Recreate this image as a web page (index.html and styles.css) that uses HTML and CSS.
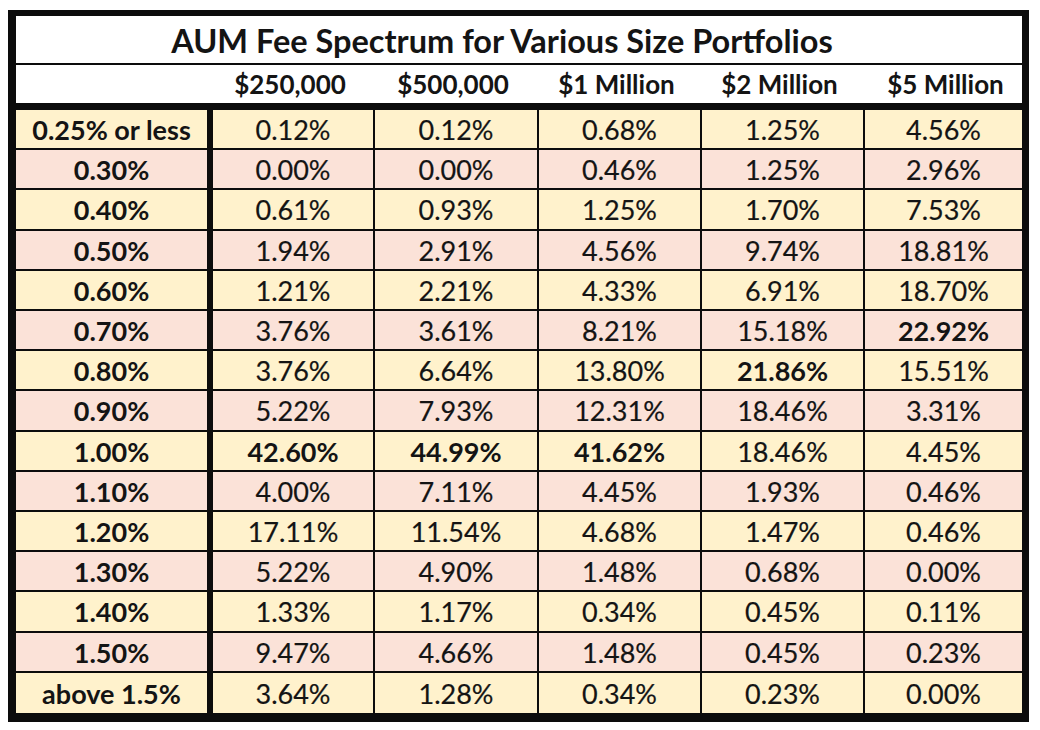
FILE: index.html
```html
<!DOCTYPE html>
<html lang="en">
<head>
<meta charset="utf-8">
<title>AUM Fee Spectrum</title>
<link rel="stylesheet" href="styles.css">
</head>
<body>
<div class="frame">
  <div class="grid">
    <div class="title">AUM Fee Spectrum for Various Size Portfolios</div>
    <div class="hd first"></div>
    <div class="hd">$250,000</div>
    <div class="hd">$500,000</div>
    <div class="hd">$1 Million</div>
    <div class="hd">$2 Million</div>
    <div class="hd last">$5 Million</div>

    <div class="c y lbl">0.25% or less</div><div class="c y">0.12%</div><div class="c y">0.12%</div><div class="c y">0.68%</div><div class="c y">1.25%</div><div class="c y last">4.56%</div>
    <div class="c p lbl">0.30%</div><div class="c p">0.00%</div><div class="c p">0.00%</div><div class="c p">0.46%</div><div class="c p">1.25%</div><div class="c p last">2.96%</div>
    <div class="c y lbl">0.40%</div><div class="c y">0.61%</div><div class="c y">0.93%</div><div class="c y">1.25%</div><div class="c y">1.70%</div><div class="c y last">7.53%</div>
    <div class="c p lbl">0.50%</div><div class="c p">1.94%</div><div class="c p">2.91%</div><div class="c p">4.56%</div><div class="c p">9.74%</div><div class="c p last">18.81%</div>
    <div class="c y lbl">0.60%</div><div class="c y">1.21%</div><div class="c y">2.21%</div><div class="c y">4.33%</div><div class="c y">6.91%</div><div class="c y last">18.70%</div>
    <div class="c p lbl">0.70%</div><div class="c p">3.76%</div><div class="c p">3.61%</div><div class="c p">8.21%</div><div class="c p">15.18%</div><div class="c p last b">22.92%</div>
    <div class="c y lbl">0.80%</div><div class="c y">3.76%</div><div class="c y">6.64%</div><div class="c y">13.80%</div><div class="c y b">21.86%</div><div class="c y last">15.51%</div>
    <div class="c p lbl">0.90%</div><div class="c p">5.22%</div><div class="c p">7.93%</div><div class="c p">12.31%</div><div class="c p">18.46%</div><div class="c p last">3.31%</div>
    <div class="c y lbl">1.00%</div><div class="c y b">42.60%</div><div class="c y b">44.99%</div><div class="c y b">41.62%</div><div class="c y">18.46%</div><div class="c y last">4.45%</div>
    <div class="c p lbl">1.10%</div><div class="c p">4.00%</div><div class="c p">7.11%</div><div class="c p">4.45%</div><div class="c p">1.93%</div><div class="c p last">0.46%</div>
    <div class="c y lbl">1.20%</div><div class="c y">17.11%</div><div class="c y">11.54%</div><div class="c y">4.68%</div><div class="c y">1.47%</div><div class="c y last">0.46%</div>
    <div class="c p lbl">1.30%</div><div class="c p">5.22%</div><div class="c p">4.90%</div><div class="c p">1.48%</div><div class="c p">0.68%</div><div class="c p last">0.00%</div>
    <div class="c y lbl">1.40%</div><div class="c y">1.33%</div><div class="c y">1.17%</div><div class="c y">0.34%</div><div class="c y">0.45%</div><div class="c y last">0.11%</div>
    <div class="c p lbl">1.50%</div><div class="c p">9.47%</div><div class="c p">4.66%</div><div class="c p">1.48%</div><div class="c p">0.45%</div><div class="c p last">0.23%</div>
    <div class="c y lbl end">above 1.5%</div><div class="c y end">3.64%</div><div class="c y end">1.28%</div><div class="c y end">0.34%</div><div class="c y end">0.23%</div><div class="c y last end">0.00%</div>
  </div>
</div>
</body>
</html>
```
FILE: styles.css
```css
html, body {
  margin: 0;
  padding: 0;
  background: #ffffff;
}

body {
  font-family: Lato, "Open Sans", "Liberation Sans", sans-serif;
  color: #141414;
}

.frame {
  box-sizing: border-box;
  margin: 10px 0 0 8px;
  width: 1021px;
  height: 712px;
  border-style: solid;
  border-color: #0c0c0c;
  border-width: 6px 7px 9px 8px;
  background: #ffffff;
}

.grid {
  display: grid;
  height: 100%;
  grid-template-columns: 197px 162px 164px 163px 163px 1fr;
  grid-template-rows: 49px 45px repeat(15, 1fr);
}

.title {
  grid-column: 1 / -1;
  box-sizing: border-box;
  border-bottom: 2px solid #0c0c0c;
  display: flex;
  align-items: center;
  justify-content: center;
  font-weight: 700;
  font-size: 32.5px;
  padding-right: 34px;
  padding-top: 2px;
}

.hd {
  box-sizing: border-box;
  border-bottom: 7px solid #0c0c0c;
  display: flex;
  align-items: center;
  justify-content: center;
  font-weight: 700;
  font-size: 26px;
  padding-right: 8px;
}

.hd.last {
  padding-right: 0;
  padding-left: 4px;
}

.c {
  box-sizing: border-box;
  border-right: 2px solid #0c0c0c;
  border-bottom: 2px solid #0c0c0c;
  display: flex;
  align-items: center;
  justify-content: center;
  font-size: 27px;
  padding-top: 1px;
  -webkit-text-stroke: 0.2px #141414;
}

.c.lbl {
  border-right-width: 6px;
  font-weight: 700;
  -webkit-text-stroke: 0;
}

.c.last {
  border-right: none;
}

.c.end {
  border-bottom: none;
}

.c.b {
  font-weight: 700;
  -webkit-text-stroke: 0;
}

.y {
  background: #fff2cc;
}

.p {
  background: #fbe2d8;
}
```
